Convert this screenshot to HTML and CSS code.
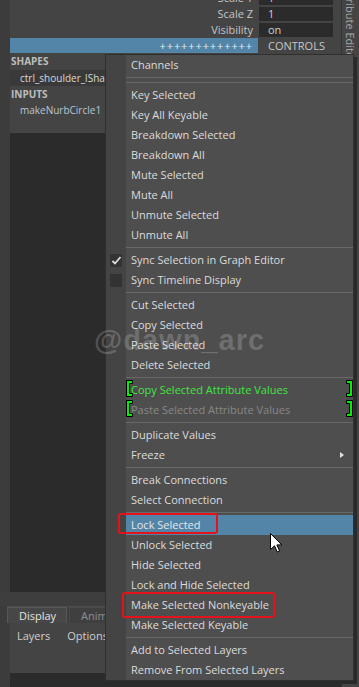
FILE: index.html
```html
<!DOCTYPE html>
<html>
<head>
<meta charset="utf-8">
<link rel="stylesheet" href="styles.css">
</head>
<body>
<div class="screen">
  <div class="lstrip"></div>
  <div class="main">
    <div class="attrs">
      <div class="arow"><div class="alabel">Scale Y</div><div class="aval">1</div></div>
      <div class="arow"><div class="alabel">Scale Z</div><div class="aval">1</div></div>
      <div class="arow"><div class="alabel">Visibility</div><div class="aval">on</div></div>
      <div class="arow sect"><div class="bluebar">+++++++++++++</div><div class="sectname">CONTROLS</div></div>
    </div>
    <div class="outliner">
      <div class="hdr">SHAPES</div>
      <div class="node sel">ctrl_shoulder_lShape</div>
      <div class="hdr">INPUTS</div>
      <div class="node input">makeNurbCircle1</div>
      <div class="gap1"></div>
      <div class="darkarea"></div>
      <div class="gap2"></div>
      <div class="tabs"><div class="tab active">Display</div><div class="tab">Anim</div></div>
      <div class="optrow"><span class="opt">Layers</span><span class="opt">Options</span></div>
      <div class="gap3"></div>
      <div class="darkarea bottom"></div>
    </div>
  </div>
  <div class="aestrip"><span class="aetext">Attribute Editor</span></div>

  <div class="menu">
    <div class="mi"><div class="g"></div><div class="t">Channels</div></div>
    <div class="sep"></div>
    <div class="sep"></div>
    <div class="mi"><div class="g"></div><div class="t">Key Selected</div></div>
    <div class="mi"><div class="g"></div><div class="t">Key All Keyable</div></div>
    <div class="mi"><div class="g"></div><div class="t">Breakdown Selected</div></div>
    <div class="mi"><div class="g"></div><div class="t">Breakdown All</div></div>
    <div class="mi"><div class="g"></div><div class="t">Mute Selected</div></div>
    <div class="mi"><div class="g"></div><div class="t">Mute All</div></div>
    <div class="mi"><div class="g"></div><div class="t">Unmute Selected</div></div>
    <div class="mi"><div class="g"></div><div class="t">Unmute All</div></div>
    <div class="sep"></div>
    <div class="mi"><div class="g"><span class="cb"><svg width="13" height="13" viewBox="0 0 13 13"><path d="M2.5 7 L5 9.5 L10.5 3" fill="none" stroke="#dcdcdc" stroke-width="1.8"/></svg></span></div><div class="t">Sync Selection in Graph Editor</div></div>
    <div class="mi"><div class="g"><span class="cb"></span></div><div class="t">Sync Timeline Display</div></div>
    <div class="sep"></div>
    <div class="mi"><div class="g"></div><div class="t">Cut Selected</div></div>
    <div class="mi"><div class="g"></div><div class="t">Copy Selected</div></div>
    <div class="mi"><div class="g"></div><div class="t">Paste Selected</div></div>
    <div class="mi"><div class="g"></div><div class="t">Delete Selected</div></div>
    <div class="sep"></div>
    <div class="mi"><div class="g"></div><div class="t green">Copy Selected Attribute Values</div>
      <svg class="brk brk-l" width="7" height="17" viewBox="0 0 7 17"><polygon points="0.5,0.5 6.5,0.5 6.5,3.5 3.5,3.5 3.5,13.5 6.5,13.5 6.5,16.5 0.5,16.5" fill="#00f000" stroke="#000" stroke-width="1"/></svg>
      <svg class="brk brk-r" width="7" height="17" viewBox="0 0 7 17"><polygon points="6.5,0.5 0.5,0.5 0.5,3.5 3.5,3.5 3.5,13.5 0.5,13.5 0.5,16.5 6.5,16.5" fill="#00f000" stroke="#000" stroke-width="1"/></svg>
    </div>
    <div class="mi"><div class="g"></div><div class="t dis">Paste Selected Attribute Values</div>
      <svg class="brk brk-l" width="7" height="17" viewBox="0 0 7 17"><polygon points="0.5,0.5 6.5,0.5 6.5,3.5 3.5,3.5 3.5,13.5 6.5,13.5 6.5,16.5 0.5,16.5" fill="#00f000" stroke="#000" stroke-width="1"/></svg>
      <svg class="brk brk-r" width="7" height="17" viewBox="0 0 7 17"><polygon points="6.5,0.5 0.5,0.5 0.5,3.5 3.5,3.5 3.5,13.5 0.5,13.5 0.5,16.5 6.5,16.5" fill="#00f000" stroke="#000" stroke-width="1"/></svg>
    </div>
    <div class="sep"></div>
    <div class="mi"><div class="g"></div><div class="t">Duplicate Values</div></div>
    <div class="mi"><div class="g"></div><div class="t">Freeze<span class="sub"></span></div></div>
    <div class="sep"></div>
    <div class="mi"><div class="g"></div><div class="t">Break Connections</div></div>
    <div class="mi"><div class="g"></div><div class="t">Select Connection</div></div>
    <div class="sep"></div>
    <div class="mi hl"><div class="g"></div><div class="t">Lock Selected</div><span class="redbox rb-lock"></span></div>
    <div class="mi"><div class="g"></div><div class="t">Unlock Selected</div></div>
    <div class="mi"><div class="g"></div><div class="t">Hide Selected</div></div>
    <div class="mi"><div class="g"></div><div class="t">Lock and Hide Selected</div></div>
    <div class="mi"><div class="g"></div><div class="t">Make Selected Nonkeyable</div><span class="redbox rb-nonkey"></span></div>
    <div class="mi"><div class="g"></div><div class="t">Make Selected Keyable</div></div>
    <div class="sep"></div>
    <div class="mi"><div class="g"></div><div class="t">Add to Selected Layers</div></div>
    <div class="mi"><div class="g"></div><div class="t">Remove From Selected Layers</div></div>
  </div>

  <div class="watermark">@dawn_arc</div>

  <svg class="cursor" width="13" height="20" viewBox="0 0 13 20"><path d="M0.5 0.5 L0.5 16.5 L4.5 12.8 L7.3 19 L9.6 18 L6.9 11.9 L11.8 11.9 Z" fill="#fff" stroke="#000" stroke-width="1" stroke-linejoin="miter"/></svg>
</div>
</body>
</html>
```
FILE: styles.css
```css
* { box-sizing: border-box; }
body {
  margin: 0;
  background: #444;
  font-family: "Open Sans", sans-serif;
  font-size: 11px;
  color: #d0d0d0;
}
.screen {
  position: relative;
  width: 359px;
  height: 687px;
  overflow: hidden;
  display: flex;
  background: #444;
}
.lstrip { width: 10px; flex: none; background: #3c3c3c; }
.main { width: 331px; flex: none; display: flex; flex-direction: column; }
.aestrip {
  flex: 1;
  border-left: 1px solid #333;
  background: #444;
  overflow: hidden;
}
.aetext {
  display: block;
  writing-mode: vertical-rl;
  margin-top: -16px;
  line-height: 16px;
  color: #a6a6a6;
  white-space: nowrap;
}

/* attribute rows */
.attrs { margin-top: -10px; display: flex; flex-direction: column; }
.arow { display: flex; height: 16px; }
.alabel { width: 243px; text-align: right; line-height: 16px; color: #c4c4c4; }
.aval {
  margin: 1px 0 1px 6px;
  width: 74px;
  height: 14px;
  background: #2b2b2b;
  padding-left: 9px;
  line-height: 14px;
  color: #cfcfcf;
}
.arow.sect { height: 15px; }
.bluebar {
  width: 248px;
  background: #5285a8;
  text-align: right;
  padding-right: 5px;
  color: #e8eef2;
  letter-spacing: 0.9px;
  line-height: 15px;
}
.sectname { margin-left: 10px; line-height: 15px; color: #c8c8c8; }

/* outliner */
.outliner { display: flex; flex-direction: column; flex: 1; }
.hdr {
  height: 17px;
  line-height: 17px;
  padding-left: 1px;
  font-size: 10px;
  font-weight: 700;
  color: #bdbdbd;
}
.hdr + .node + .hdr { height: 16px; line-height: 16px; }
.node {
  height: 16px;
  line-height: 16px;
  padding-left: 10px;
  font-size: 10px;
  white-space: nowrap;
  color: #d6dade;
}
.node.sel { background: #393939; }
.node.input { color: #b9c6d3; }
.gap1 { height: 15px; }
.darkarea { height: 459px; background: #2b2b2b; }
.darkarea.bottom { flex: 1; height: auto; }
.gap2 { height: 14px; background: #3e3e3e; margin-left: -10px; }
.tabs {
  height: 17px;
  display: flex;
  margin-left: -3px;
  background: #3e3e3e;
  border-top: 1px solid #4c4c4c;
}
.tab {
  height: 16px;
  line-height: 15px;
  padding-left: 11px;
  border: 1px solid #4a4a4a;
  border-bottom: none;
  background: #3f3f3f;
  color: #8e8e8e;
}
.tab.active {
  width: 60px;
  background: #474747;
  border-color: #585858;
  color: #e2e2e2;
}
.tab + .tab { margin-left: 2px; width: 60px; }
.optrow { height: 27px; line-height: 26px; display: flex; padding-left: 7px; gap: 17px; color: #cfcfcf; }
.gap3 { height: 23px; }

/* context menu */
.menu {
  position: absolute;
  left: 105px;
  top: 54px;
  width: 249px;
  display: flex;
  flex-direction: column;
  border: 1px solid #2f2f2f;
  background: linear-gradient(to right, #444 0, #444 20px, #4e4e4e 20px);
  box-shadow: 3px 3px 0 #2a2a2a;
  z-index: 5;
}
.mi { display: flex; height: 20px; line-height: 20px; position: relative; }
.mi .g { width: 20px; flex: none; display: flex; align-items: center; padding-left: 4px; }
.mi .t { flex: 1; padding-left: 5px; color: #dcdcdc; white-space: nowrap; position: relative; }
.mi .t.green { color: #3ee83e; }
.mi .t.dis { color: #878787; }
.mi.hl .t { background: #5285a8; color: #e6e6e6; }
.sep { height: 1px; margin: 2px 0 2px 20px; background: #686868; flex: none; }
.cb { width: 12px; height: 13px; background: #333; display: block; }
.cb svg { display: block; margin-left: -0.5px; }
.sub {
  position: absolute;
  right: 9px;
  top: 7px;
  width: 0;
  height: 0;
  border-left: 4px solid #e0e0e0;
  border-top: 3.5px solid transparent;
  border-bottom: 3.5px solid transparent;
}
.brk { position: absolute; top: 0; }
.brk-l { left: 20px; }
.brk-r { left: 240px; }
.redbox {
  position: absolute;
  border: 2px solid #e5121b;
  border-radius: 3px;
}
.rb-lock { left: 12px; top: -2px; width: 100px; height: 21px; }
.rb-nonkey { left: 16px; top: -3px; width: 153px; height: 26px; }

.watermark {
  position: absolute;
  left: 94px;
  top: 326px;
  font-family: "Liberation Sans", Arial, sans-serif;
  font-weight: 700;
  font-size: 29px;
  line-height: 29px;
  letter-spacing: 1px;
  color: rgba(255, 255, 255, 0.19);
  z-index: 6;
  white-space: nowrap;
}
.cursor { position: absolute; left: 270px; top: 533px; z-index: 7; }
```
